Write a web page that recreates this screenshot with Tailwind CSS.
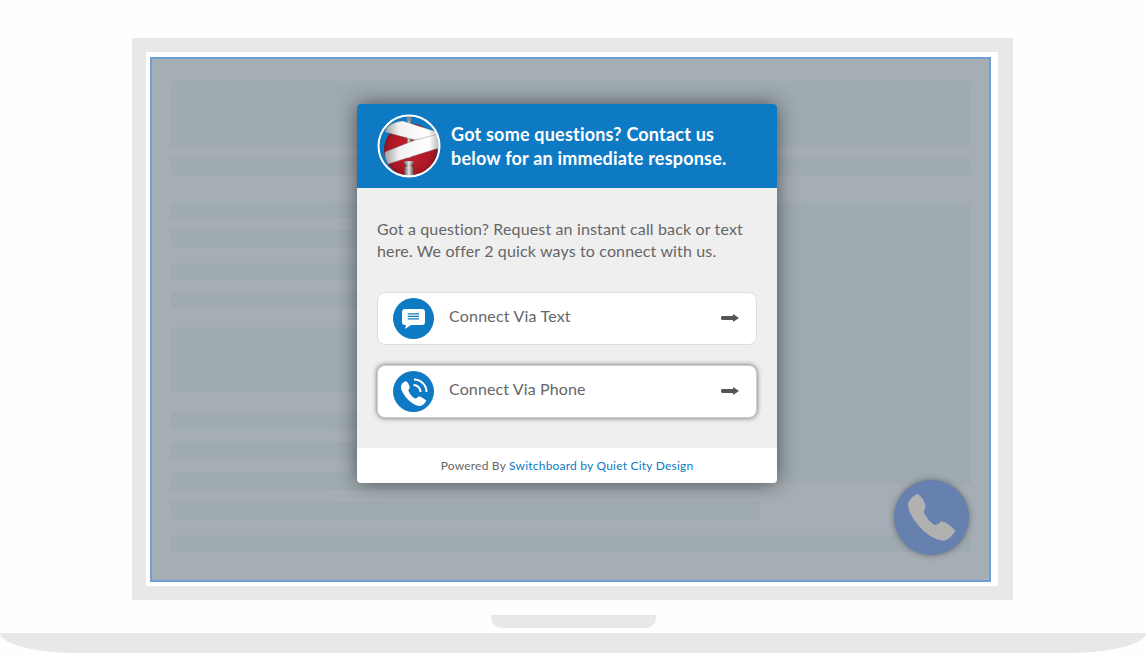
<!DOCTYPE html>
<html lang="en">
<head>
    <meta charset="UTF-8">
    <meta name="viewport" content="width=device-width, initial-scale=1.0">
    <script src="https://cdn.jsdelivr.net/npm/@tailwindcss/browser@4"></script>
    <title>Switchboard</title>
</head>

<body class="bg-[#fefefe] h-[653px] overflow-hidden font-['Lato',sans-serif]">

    <!-- laptop lid -->
    <div class="ml-[132px] mt-[38px] w-[881px] h-[562px] bg-[#e8e8e8] pt-[14px] pl-[14px] pr-[15px] pb-[14px]">
        <div class="w-full h-full bg-white pt-[5px] pl-[4px] pr-[7px] pb-[4px]">

            <!-- dimmed website -->
            <div class="relative w-full h-full bg-[#a6aeb5] border-2 border-[#709fd4] pt-[22px] pl-[19px] pr-[18px]">
                <div class="h-[66px] bg-[#9fabb1]"></div>
                <div class="h-[18px] mt-[10px] bg-[#9fabb1]"></div>

                <div class="flex mt-[28px]">
                    <div class="w-[606px] pr-[17px] flex flex-col">
                        <div class="h-[15px] bg-[#9fabb1]"></div>
                        <div class="h-[17px] mt-[12px] bg-[#9fabb1]"></div>
                        <div class="h-[17px] mt-[16px] bg-[#9fabb1]"></div>
                        <div class="h-[16px] mt-[12px] bg-[#9fabb1]"></div>
                        <div class="h-[65px] mt-[19px] bg-[#9fabb1]"></div>
                        <div class="h-[17px] mt-[20px] bg-[#9fabb1]"></div>
                        <div class="h-[17px] mt-[13px] bg-[#9fabb1]"></div>
                        <div class="h-[17px] mt-[14px] bg-[#9fabb1]"></div>
                    </div>
                    <div class="w-[194px] h-[281px] bg-[#9fabb1]"></div>
                </div>

                <div class="h-[17px] w-[589px] mt-[12px] bg-[#9fabb1]"></div>
                <div class="h-[17px] mt-[16px] bg-[#9fabb1]"></div>

                <!-- floating call button -->
                <div class="absolute left-[742px] top-[421px] w-[75px] h-[75px] rounded-full bg-[#6680b0] shadow-[0_0_6px_rgba(60,60,60,0.6)] flex items-center justify-center">
                    <svg width="52" height="52" viewBox="140 125 155 155" fill="#b1b1b1">
                        <path d="M175 131 C160 136 146 150 146 165 C150 202 200 264 250 270 C264 270 280 255 287 240 C275 226 258 214 245 212 C238 219 232 224 226 223 C214 218 200 200 193 185 C195 178 198 172 198 165 C195 152 187 138 175 131 Z"/>
                    </svg>
                </div>

                <!-- modal -->
                <div class="absolute left-[205px] top-[45px] w-[420px] rounded-[4px] overflow-hidden shadow-[0_0_20px_rgba(30,30,30,0.65)]">
                    <div class="h-[84px] bg-[#0e7ac4] flex items-center pl-[20px] gap-[10px]">
                        <svg width="64" height="64" viewBox="0 0 64 64" class="shrink-0">
                            <defs>
                                <radialGradient id="ball" cx="0.5" cy="0.5" r="0.6">
                                    <stop offset="0" stop-color="#c8202e"/>
                                    <stop offset="0.7" stop-color="#a81824"/>
                                    <stop offset="1" stop-color="#5e0d14"/>
                                </radialGradient>
                                <linearGradient id="band" x1="0" y1="0" x2="1" y2="0">
                                    <stop offset="0" stop-color="#a0a0a0"/>
                                    <stop offset="0.25" stop-color="#f0f0f0"/>
                                    <stop offset="0.8" stop-color="#ffffff"/>
                                    <stop offset="1" stop-color="#b0b0b0"/>
                                </linearGradient>
                                <linearGradient id="pole" x1="0" y1="0" x2="1" y2="0">
                                    <stop offset="0" stop-color="#666"/>
                                    <stop offset="0.5" stop-color="#e4e4e4"/>
                                    <stop offset="1" stop-color="#555"/>
                                </linearGradient>
                                <clipPath id="inner"><circle cx="32" cy="32" r="30"/></clipPath>
                            </defs>
                            <g clip-path="url(#inner)">
                                <circle cx="33.5" cy="36" r="26.5" fill="url(#ball)"/>
                                <rect x="30" y="4" width="4" height="40" fill="url(#pole)"/>
                                <rect x="27" y="47" width="10" height="3" fill="url(#pole)"/>
                                <rect x="28.5" y="50" width="7" height="3" fill="url(#pole)"/>
                                <rect x="27.5" y="53" width="9" height="11" fill="url(#pole)"/>
                                <circle cx="32" cy="5" r="2.4" fill="#8a8a8a"/>
                                <path d="M8 18 Q9 13 13 11 Q20 7 26 7 L60 18 Q62 21 62 24 L38 26 Z" fill="url(#band)" stroke="#777" stroke-width="0.4"/>
                                <path d="M38 26 L62 20 Q64 27 62 34 L11 50 Q7 44 8 38 Z" fill="url(#band)" stroke="#777" stroke-width="0.4"/>
                            </g>
                            <circle cx="32" cy="32" r="30.5" fill="none" stroke="#fff" stroke-width="2"/>
                        </svg>
                        <p class="text-white text-[18px] leading-[24px] font-bold tracking-[0.2px]">Got some questions? Contact us<br>below for an immediate response.</p>
                    </div>

                    <div class="h-[260px] bg-[#efefef] px-[20px] pt-[30px]">
                        <p class="text-[16px] leading-[22px] text-[#666666] tracking-[0.14px]">Got a question? Request an instant call back or text here. We offer 2 quick ways to connect with us.</p>

                        <div class="mt-[30px] h-[53px] bg-white border border-[#dddddd] rounded-[8px] flex items-center pl-[15px] pr-[17px]">
                            <span class="w-[41px] h-[41px] rounded-full bg-[#0e7ac4] shrink-0">
                                <svg width="41" height="41" viewBox="0 0 41 41">
                                    <path d="M12 11 H29 Q32 11 32 14 V24 Q32 27 29 27 H18 L12 31 L13 27 H12 Q9 27 9 24 V14 Q9 11 12 11 Z" fill="#fff"/>
                                    <path d="M14.7 15.8 H26 M14.7 18.3 H26 M14.7 20.8 H26" stroke="#0e7ac4" stroke-width="1.3"/>
                                </svg>
                            </span>
                            <span class="ml-[15px] text-[16px] text-[#666666] tracking-[0.2px] -translate-y-[3px]">Connect Via Text</span>
                            <svg class="ml-auto -translate-y-[1px]" width="18" height="10" viewBox="0 0 18 10" fill="#555">
                                <path d="M1 3 H12 V1 L18 5 L12 9 V7 H1 Q0 7 0 5 Q0 3 1 3 Z"/>
                            </svg>
                        </div>

                        <div class="mt-[20px] h-[53px] bg-white border border-[#cfcfcf] rounded-[8px] shadow-[0_0_5px_rgba(70,70,70,0.8)] flex items-center pl-[15px] pr-[17px]">
                            <span class="w-[41px] h-[41px] rounded-full bg-[#0e7ac4] shrink-0">
                                <svg width="41" height="41" viewBox="0 0 41 41">
                                    <path transform="translate(-19.4 -14.6) scale(0.185)" d="M175 133 C160 138 148 150 148 165 C150 200 200 262 250 268 C262 268 278 255 285 240 C275 228 258 218 245 215 C238 222 232 228 225 227 C210 222 195 200 188 185 C190 178 195 172 195 165 C192 152 185 140 175 133 Z" fill="#fff"/>
                                    <path d="M21 8.5 A12.5 12.5 0 0 1 33.5 21 M20.5 14 A7 7 0 0 1 27.5 21" fill="none" stroke="#fff" stroke-width="2"/>
                                </svg>
                            </span>
                            <span class="ml-[15px] text-[16px] text-[#666666] tracking-[0.12px] -translate-y-[3px]">Connect Via Phone</span>
                            <svg class="ml-auto -translate-y-[1px]" width="18" height="10" viewBox="0 0 18 10" fill="#555">
                                <path d="M1 3 H12 V1 L18 5 L12 9 V7 H1 Q0 7 0 5 Q0 3 1 3 Z"/>
                            </svg>
                        </div>
                    </div>

                    <div class="h-[35px] bg-white flex items-center justify-center text-[12px] text-[#666666] tracking-[0.21px]">
                        Powered By&nbsp;<span class="text-[#0e7ac4]">Switchboard by Quiet City Design</span>
                    </div>
                </div>
            </div>
        </div>
    </div>

    <!-- laptop hinge and base -->
    <div class="ml-[491px] mt-[15px] w-[165px] h-[13px] bg-[#e8e8e8] rounded-b-[10px]"></div>
    <div class="mt-[5px] h-[20px] bg-[#e8e8e8] rounded-b-[80px_20px]"></div>

</body>
</html>
